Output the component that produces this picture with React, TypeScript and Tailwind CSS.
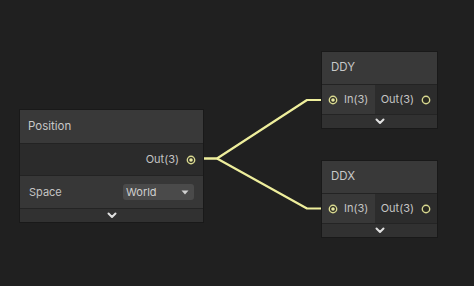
import React from "react";

const font = { fontFamily: "Inter, 'Noto Sans', sans-serif" };

function Chevron() {
  return (
    <svg width="10" height="7" viewBox="0 0 10 7">
      <path d="M1.5 1.5 L5 5 L8.5 1.5" stroke="#e0e0e0" strokeWidth="2" fill="none" strokeLinecap="round" strokeLinejoin="round" />
    </svg>
  );
}

function Port({ connected }: { connected: boolean }) {
  return (
    <svg width="10" height="10" viewBox="0 0 10 10">
      <circle cx="5" cy="5" r="3.7" stroke="#d8d890" strokeWidth="1.4" fill="#2a2a22" />
      {connected && <circle cx="5" cy="5" r="1.8" fill="#e8e8a0" />}
    </svg>
  );
}

function SmallNode({ title, top }: { title: string; top: number }) {
  return (
    <div
      className="absolute left-[321px] w-[117px] border border-[#191919] bg-[#2a2a2a] flex flex-col"
      style={{ top }}
    >
      <div className="h-[32px] bg-[#393939] flex items-center pl-[9px] text-[11.5px] text-[#c8c8c8]">{title}</div>
      <div className="h-[30px] flex border-t border-[#232323]">
        <div className="w-[53px] bg-[#383838] flex items-center pl-[6px] gap-[6px] text-[11px] text-[#c4c4c4]">
          <Port connected />
          <span>In(3)</span>
        </div>
        <div className="flex-1 bg-[#2c2c2c] flex items-center justify-end pr-[6px] gap-[7px] text-[11px] text-[#c4c4c4]">
          <span>Out(3)</span>
          <Port connected={false} />
        </div>
      </div>
      <div className="h-[14px] bg-[#313131] border-t border-[#242424] flex items-center justify-center">
        <Chevron />
      </div>
    </div>
  );
}

export default function App() {
  return (
    <div className="relative w-[474px] h-[286px] bg-[#202020] overflow-hidden" style={font}>
      <svg className="absolute left-0 top-0" width="474" height="286">
        <path
          d="M196 158.5 L217 158.5 L307 100 L330 100"
          stroke="#eeee9c"
          strokeWidth="2.2"
          fill="none"
          strokeLinejoin="round"
        />
        <path
          d="M196 158.5 L217 158.5 L307 208.5 L330 208.5"
          stroke="#eeee9c"
          strokeWidth="2.2"
          fill="none"
          strokeLinejoin="round"
        />
      </svg>

      {/* Position node */}
      <div className="absolute left-[19px] top-[109px] w-[185px] border border-[#191919] bg-[#2a2a2a] flex flex-col">
        <div className="h-[33px] bg-[#393939] flex items-center pl-[8px] text-[11.5px] text-[#c8c8c8]">Position</div>
        <div className="h-[32px] bg-[#2b2b2b] border-t border-[#232323] flex items-center justify-end pr-[7px] gap-[7px] text-[11px] text-[#c4c4c4]">
          <span>Out(3)</span>
          <Port connected />
        </div>
        <div className="h-[33px] bg-[#373737] border-t border-[#232323] flex items-center justify-between pl-[9px] pr-[9px] text-[11px] text-[#c4c4c4]">
          <span>Space</span>
          <div className="w-[71px] h-[16px] bg-[#4a4a4a] rounded-[3px] flex items-center justify-between pl-[3px] pr-[5px] text-[#cfcfcf]">
            <span>World</span>
            <svg width="8" height="5" viewBox="0 0 8 5">
              <path d="M0.5 0.5 L7.5 0.5 L4 4.5 Z" fill="#d0d0d0" />
            </svg>
          </div>
        </div>
        <div className="h-[14px] bg-[#313131] border-t border-[#242424] flex items-center justify-center">
          <Chevron />
        </div>
      </div>

      <SmallNode title="DDY" top={51} />
      <SmallNode title="DDX" top={160} />
    </div>
  );
}
